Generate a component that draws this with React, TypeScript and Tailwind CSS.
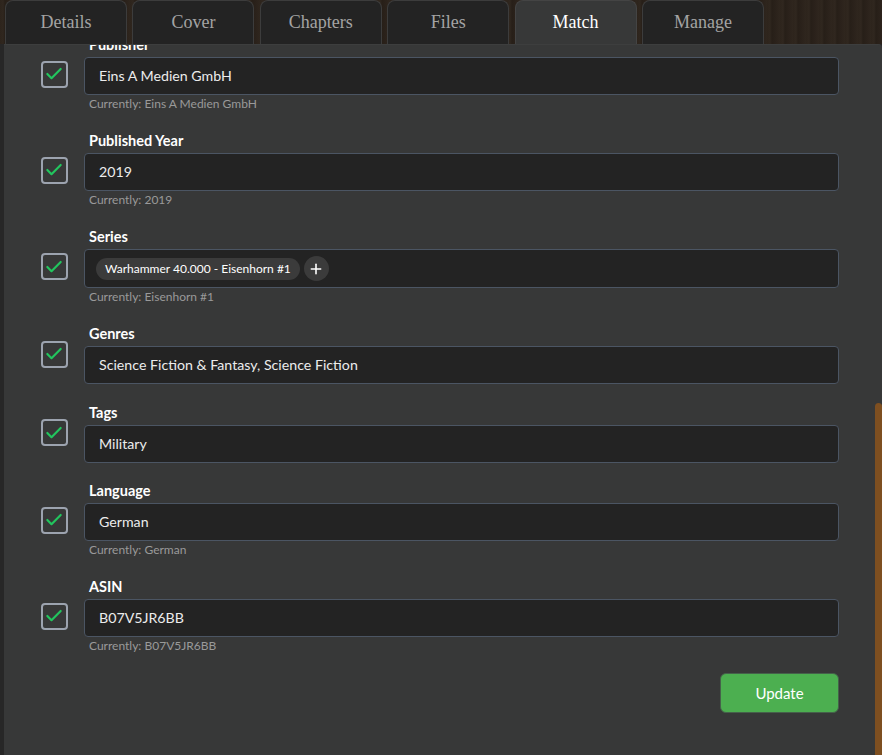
import { Check, Plus } from "lucide-react";

const tabs = ["Details", "Cover", "Chapters", "Files", "Match", "Manage"];

interface FieldProps {
  label: string;
  value?: string;
  current?: string;
  chip?: string;
}

const fields: FieldProps[] = [
  { label: "Publisher", value: "Eins A Medien GmbH", current: "Eins A Medien GmbH" },
  { label: "Published Year", value: "2019", current: "2019" },
  { label: "Series", chip: "Warhammer 40.000 - Eisenhorn #1", current: "Eisenhorn #1" },
  { label: "Genres", value: "Science Fiction & Fantasy, Science Fiction" },
  { label: "Tags", value: "Military" },
  { label: "Language", value: "German", current: "German" },
  { label: "ASIN", value: "B07V5JR6BB", current: "B07V5JR6BB" },
];

function MatchField({ label, value, current, chip }: FieldProps) {
  return (
    <div className={`flex items-center ${current ? "mb-[18px]" : "mb-[18.5px]"}`}>
      <div className="w-[60px] flex justify-center shrink-0">
        <div className="w-[27px] h-[27px] rounded-[4px] border-2 border-[#9ca3af] flex items-center justify-center">
          <Check size={20} strokeWidth={2.6} color="#22c55e" />
        </div>
      </div>
      <div className="flex-1">
        <p className="h-5 leading-5 mb-0.5 px-[5px] text-[14.5px] font-bold text-white">
          {label}
        </p>
        <div
          className={`flex items-center gap-1 rounded-[4px] border border-[#4b5563] bg-[#232323] px-[14px] ${
            chip ? "h-[39px]" : "h-[38px]"
          }`}
        >
          {chip ? (
            <>
              <span className="-ml-[3px] h-[22px] flex items-center rounded-full bg-[#3b3b3b] px-[9px] text-[12px] text-white">
                {chip}
              </span>
              <span className="w-[25px] h-[25px] rounded-full bg-[#3b3b3b] flex items-center justify-center">
                <Plus size={16} strokeWidth={2.4} color="#fff" />
              </span>
            </>
          ) : (
            <span className="text-[14.2px] text-[#ececec]">{value}</span>
          )}
        </div>
        {current && (
          <p className="h-[18px] leading-[18px] px-[5px] text-[12px] text-[#9a9a9a]">
            Currently: {current}
          </p>
        )}
      </div>
    </div>
  );
}

export default function App() {
  return (
    <div
      className="w-[882px] h-[755px] flex flex-col bg-[#272727] overflow-hidden"
      style={{ fontFamily: "Lato, 'Noto Sans', sans-serif" }}
    >
      <div className="h-[44px] shrink-0 flex gap-[5.4px] pl-[5px] bg-[repeating-linear-gradient(90deg,#2d241c_0px,#30271f_3px,#271f18_5px,#2b221b_9px,#2f261e_13px)]">
        {tabs.map((t) => (
          <div
            key={t}
            className={`w-[122px] h-[44px] flex items-center justify-center rounded-t-[8px] border border-b-0 text-[18px] ${
              t === "Match"
                ? "bg-[#373838] border-[#444] text-white"
                : "bg-[#232323] border-[#3c3c3c] text-[#a3a3a3]"
            }`}
            style={{ fontFamily: "'Liberation Serif', serif" }}
          >
            {t}
          </div>
        ))}
      </div>
      <div className="flex-1 ml-[4px] flex bg-[#373838] border-t border-[#3d3e3e] rounded-tr-[4px] overflow-hidden">
        <div className="flex-1 pl-[20px] pr-[36px] -mt-[10px]">
          {fields.map((f) => (
            <MatchField key={f.label} {...f} />
          ))}
          <div className="flex justify-end mt-[1px]">
            <button className="w-[119px] h-[40px] rounded-[6px] border border-[#45614a] bg-[#4caf50] text-[15px] text-white">
              Update
            </button>
          </div>
        </div>
        <div className="w-[7px] flex flex-col">
          <div className="h-[358px]" />
          <div className="flex-1 rounded-t-[4px] bg-[#7e4f20]" />
        </div>
      </div>
    </div>
  );
}
